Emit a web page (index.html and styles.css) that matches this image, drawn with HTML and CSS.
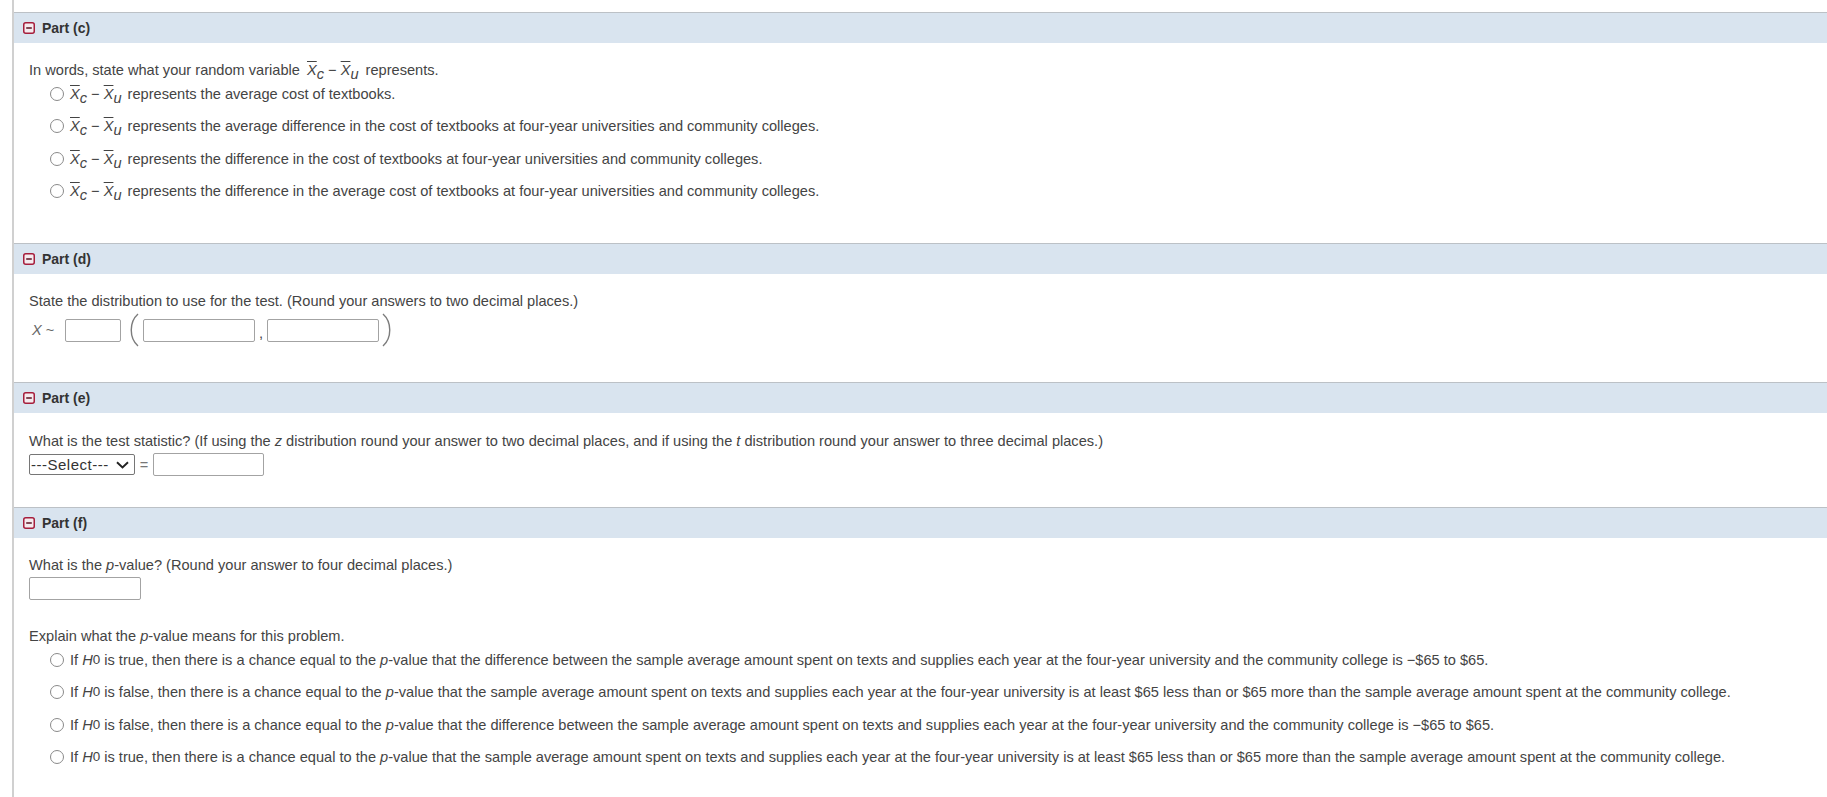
FILE: index.html
```html
<!DOCTYPE html>
<html lang="en">
<head>
<meta charset="utf-8">
<title>Parts c-f</title>
<link rel="stylesheet" href="styles.css">
</head>
<body>
<div class="page">

  <section class="part">
    <div class="head">
      <svg class="toggle" width="12" height="12" viewBox="0 0 12 12"><rect x="0.75" y="0.75" width="10.5" height="10.5" rx="2" fill="#f5eaee" stroke="#a61e3c" stroke-width="1.5"/><line x1="3.2" y1="6" x2="8.8" y2="6" stroke="#5a1020" stroke-width="1.5"/></svg>
      <span>Part (c)</span>
    </div>
    <div class="body body-c">
      <p class="q">In words, state what your random variable <span class="rv"><span class="xb">X</span><sub>c</sub> − <span class="xb">X</span><sub>u</sub></span> represents.</p>
      <div class="opts">
        <div class="opt"><span class="radio"></span><span class="rv"><span class="xb">X</span><sub>c</sub> − <span class="xb">X</span><sub>u</sub></span> represents the average cost of textbooks.</div>
        <div class="opt"><span class="radio"></span><span class="rv"><span class="xb">X</span><sub>c</sub> − <span class="xb">X</span><sub>u</sub></span> represents the average difference in the cost of textbooks at four-year universities and community colleges.</div>
        <div class="opt"><span class="radio"></span><span class="rv"><span class="xb">X</span><sub>c</sub> − <span class="xb">X</span><sub>u</sub></span> represents the difference in the cost of textbooks at four-year universities and community colleges.</div>
        <div class="opt"><span class="radio"></span><span class="rv"><span class="xb">X</span><sub>c</sub> − <span class="xb">X</span><sub>u</sub></span> represents the difference in the average cost of textbooks at four-year universities and community colleges.</div>
      </div>
    </div>
  </section>

  <section class="part">
    <div class="head">
      <svg class="toggle" width="12" height="12" viewBox="0 0 12 12"><rect x="0.75" y="0.75" width="10.5" height="10.5" rx="2" fill="#f5eaee" stroke="#a61e3c" stroke-width="1.5"/><line x1="3.2" y1="6" x2="8.8" y2="6" stroke="#5a1020" stroke-width="1.5"/></svg>
      <span>Part (d)</span>
    </div>
    <div class="body body-d">
      <p class="q">State the distribution to use for the test. (Round your answers to two decimal places.)</p>
      <div class="dist-row">
        <span class="xlabel"><i>X</i>&nbsp;~</span>
        <input class="box w56" type="text">
        <svg class="paren-l" width="22" height="34" viewBox="0 0 22 34"><path d="M17 1 C 8 9, 8 25, 17 33" fill="none" stroke="#7c7c7c" stroke-width="1.4"/></svg>
        <input class="box w112" type="text">
        <span class="comma">,</span>
        <input class="box w112" type="text">
        <svg class="paren-r" width="14" height="34" viewBox="0 0 14 34"><path d="M4 1 C 13 9, 13 25, 4 33" fill="none" stroke="#7c7c7c" stroke-width="1.4"/></svg>
      </div>
    </div>
  </section>

  <section class="part">
    <div class="head">
      <svg class="toggle" width="12" height="12" viewBox="0 0 12 12"><rect x="0.75" y="0.75" width="10.5" height="10.5" rx="2" fill="#f5eaee" stroke="#a61e3c" stroke-width="1.5"/><line x1="3.2" y1="6" x2="8.8" y2="6" stroke="#5a1020" stroke-width="1.5"/></svg>
      <span>Part (e)</span>
    </div>
    <div class="body body-e">
      <p class="q">What is the test statistic? (If using the <i>z</i> distribution round your answer to two decimal places, and if using the <i>t</i> distribution round your answer to three decimal places.)</p>
      <div class="stat-row">
        <div class="select"><span class="sel-text">---Select---</span><svg class="chev" width="13" height="8" viewBox="0 0 13 8"><path d="M1 1.2 L6.5 6.5 L12 1.2" fill="none" stroke="#222" stroke-width="1.9"/></svg></div>
        <span class="eq">=</span>
        <input class="box w111" type="text">
      </div>
    </div>
  </section>

  <section class="part">
    <div class="head">
      <svg class="toggle" width="12" height="12" viewBox="0 0 12 12"><rect x="0.75" y="0.75" width="10.5" height="10.5" rx="2" fill="#f5eaee" stroke="#a61e3c" stroke-width="1.5"/><line x1="3.2" y1="6" x2="8.8" y2="6" stroke="#5a1020" stroke-width="1.5"/></svg>
      <span>Part (f)</span>
    </div>
    <div class="body body-f">
      <p class="q">What is the <i>p</i>-value? (Round your answer to four decimal places.)</p>
      <div class="pv-row"><input class="box w112" type="text"></div>
      <p class="q explain">Explain what the <i>p</i>-value means for this problem.</p>
      <div class="opts">
        <div class="opt"><span class="radio"></span>If <i>H</i><sub class="h0">0</sub> is true, then there is a chance equal to the <i>p</i>-value that the difference between the sample average amount spent on texts and supplies each year at the four-year university and the community college is −$65 to $65.</div>
        <div class="opt"><span class="radio"></span>If <i>H</i><sub class="h0">0</sub> is false, then there is a chance equal to the <i>p</i>-value that the sample average amount spent on texts and supplies each year at the four-year university is at least $65 less than or $65 more than the sample average amount spent at the community college.</div>
        <div class="opt"><span class="radio"></span>If <i>H</i><sub class="h0">0</sub> is false, then there is a chance equal to the <i>p</i>-value that the difference between the sample average amount spent on texts and supplies each year at the four-year university and the community college is −$65 to $65.</div>
        <div class="opt"><span class="radio"></span>If <i>H</i><sub class="h0">0</sub> is true, then there is a chance equal to the <i>p</i>-value that the sample average amount spent on texts and supplies each year at the four-year university is at least $65 less than or $65 more than the sample average amount spent at the community college.</div>
      </div>
    </div>
  </section>

</div>
</body>
</html>
```

FILE: styles.css
```css
* { box-sizing: border-box; }
html, body { margin: 0; padding: 0; background: #ffffff; }
body {
  font-family: "Liberation Sans", Arial, sans-serif;
  font-size: 14.6px;
  color: #444444;
}
.page {
  margin-left: 12px;
  border-left: 2px solid #d0d0d0;
  min-height: 100vh;
  padding-top: 12px;
}
.head {
  height: 31px;
  border-top: 1px solid #bcc1c6;
  background: #d9e4ef;
  display: flex;
  align-items: center;
  gap: 7px;
  padding-left: 9px;
  font-weight: bold;
  font-size: 14px;
  color: #333333;
}
.toggle { display: block; flex: none; }
.body { padding: 19px 15px 0 15px; }
.body-c { padding-bottom: 44px; }
.body-d { padding-bottom: 35px; }
.body-e { padding-top: 20px; padding-bottom: 31px; }
.q {
  margin: 0;
  line-height: 16px;
  height: 16px;
  white-space: nowrap;
}
.opts {
  display: flex;
  flex-direction: column;
  gap: 16.5px;
  margin-top: 7.5px;
}
.opt {
  height: 16px;
  line-height: 16px;
  display: flex;
  align-items: center;
  margin-left: 21px;
  white-space: pre;
}
.radio {
  width: 14px;
  height: 14px;
  border: 1.3px solid #8a8a8a;
  border-radius: 50%;
  background: #fff;
  margin-right: 6px;
  flex: none;
}
.rv { white-space: nowrap; margin-right: 2px; }
.q .rv { margin-left: 3px; margin-right: 3px; }
.xb {
  font-style: italic;
  text-decoration: overline;
  text-decoration-thickness: 1px;
}
sub {
  font-size: 1em;
  font-style: italic;
  vertical-align: -4px;
  line-height: 0;
}
sub.h0 { font-style: normal; font-size: 0.92em; vertical-align: -5px; }
i { font-style: italic; }

.box {
  display: block;
  height: 23px;
  border: 1px solid #a3a3a3;
  border-radius: 2px;
  background: #fff;
  padding: 0;
  margin: 0;
  font: inherit;
}
.w56 { width: 56px; }
.w112 { width: 112px; }
.w111 { width: 111px; }

.dist-row {
  margin-top: 4px;
  height: 34px;
  display: flex;
  align-items: center;
}
.xlabel {
  width: 36px;
  padding-left: 3px;
  color: #666;
  line-height: 16px;
}
.paren-l, .paren-r { display: block; flex: none; }
.comma {
  width: 12px;
  text-align: center;
  line-height: 16px;
  padding-top: 6px;
}

.stat-row {
  margin-top: 4px;
  height: 23px;
  display: flex;
  align-items: center;
}
.select {
  width: 106px;
  height: 21px;
  border: 1px solid #767676;
  border-radius: 2px;
  display: flex;
  align-items: center;
  padding-left: 1px;
  padding-right: 5px;
  background: #fff;
}
.sel-text {
  font-size: 15px;
  letter-spacing: 0.5px;
  color: #333;
  line-height: 19px;
}
.chev { margin-left: auto; display: block; }
.eq {
  width: 18px;
  text-align: center;
  color: #777;
  line-height: 16px;
}

.pv-row { margin-top: 4px; }
.explain { margin-top: 28px; }
```
